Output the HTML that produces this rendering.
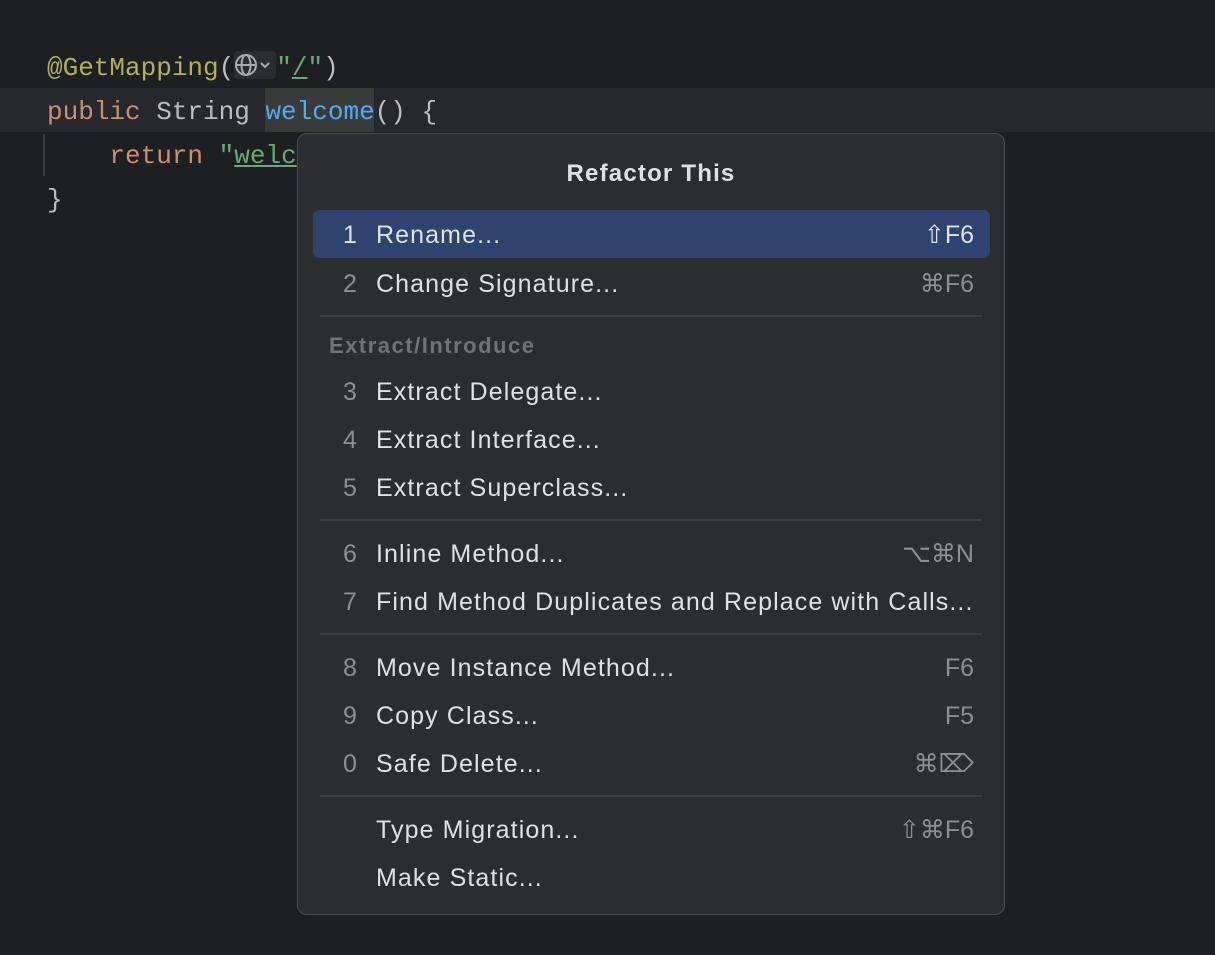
<!DOCTYPE html>
<html><head><meta charset="utf-8"><style>
body{margin:0;width:1215px;height:955px;background:#1e1f22;position:relative;overflow:hidden;font-family:"Liberation Sans",sans-serif}
.code{position:absolute;left:47px;font-family:"Liberation Mono",monospace;font-size:26px;line-height:44px;color:#bcbec4;white-space:pre}
.cur{position:absolute;left:0;top:88px;width:1215px;height:44px;background:#26282e}
.pop{position:absolute;left:297px;top:133px;width:706px;height:780px;background:#2b2d30;border:1px solid #4a4c51;border-radius:10px}
.t{position:absolute;left:0;width:100%;text-align:center;top:26px;font-weight:bold;font-size:24px;letter-spacing:1.2px;color:#dfe1e5}
.r{position:absolute;left:15px;width:677px;height:48px;line-height:50px;font-size:25px;letter-spacing:1.1px;color:#dfe1e5;border-radius:6px}
.r .n{position:absolute;left:30px;color:#8c8f94}
.r .l{position:absolute;left:63px;white-space:nowrap}
.r .k{position:absolute;right:16px;color:#8c8f94;letter-spacing:0}
.sel{background:#2e436e}.sel .n,.sel .k{color:#dfe1e5}
.sep{position:absolute;left:22px;width:662px;height:2px;background:#3d3f43}
.h{position:absolute;left:31px;font-size:22px;letter-spacing:1.5px;font-weight:bold;color:#6f737a}
</style></head><body>
<div class="cur"></div>
<div style="position:absolute;left:265px;top:88px;width:109px;height:44px;background:#373b39"></div>
<div class="code" style="top:46px"><span style="color:#b3ae60">@GetMapping</span>(<span style="display:inline-block;width:42px;height:28px;vertical-align:-4px;background:#2b2d30;border-radius:4px;position:relative"><svg width="42" height="28" style="position:absolute;left:0;top:0"><circle cx="12" cy="14" r="10" fill="none" stroke="#a8aab0" stroke-width="2"/><ellipse cx="12" cy="14" rx="4.5" ry="10" fill="none" stroke="#a8aab0" stroke-width="2"/><line x1="2" y1="14" x2="22" y2="14" stroke="#a8aab0" stroke-width="2"/><path d="M27 12l4 4 4-4" fill="none" stroke="#a8aab0" stroke-width="2"/></svg></span><span style="color:#6aab73">"<u>/</u>"</span>)</div>
<div class="code" style="top:90px"><span style="color:#cf8e6d">public</span> String <span style="color:#56a8f5">welcome</span>() {</div>
<div class="code" style="top:134px">    <span style="color:#cf8e6d">return</span> <span style="color:#6aab73">"<u>welc</u></span></div>
<div class="code" style="top:178px">}</div>
<div style="position:absolute;left:43px;top:134px;width:2px;height:42px;background:#393b40"></div>
<div class="pop">
<div class="t">Refactor This</div>
<div class="r sel" style="top:76px"><span class="n">1</span><span class="l">Rename...</span><span class="k">⇧F6</span></div>
<div class="r" style="top:125px"><span class="n">2</span><span class="l">Change Signature...</span><span class="k">⌘F6</span></div>
<div class="sep" style="top:181px"></div>
<div class="h" style="top:199px">Extract/Introduce</div>
<div class="r" style="top:233px"><span class="n">3</span><span class="l">Extract Delegate...</span></div>
<div class="r" style="top:281px"><span class="n">4</span><span class="l">Extract Interface...</span></div>
<div class="r" style="top:329px"><span class="n">5</span><span class="l">Extract Superclass...</span></div>
<div class="sep" style="top:385px"></div>
<div class="r" style="top:395px"><span class="n">6</span><span class="l">Inline Method...</span><span class="k">⌥⌘N</span></div>
<div class="r" style="top:443px"><span class="n">7</span><span class="l">Find Method Duplicates and Replace with Calls...</span></div>
<div class="sep" style="top:499px"></div>
<div class="r" style="top:509px"><span class="n">8</span><span class="l">Move Instance Method...</span><span class="k">F6</span></div>
<div class="r" style="top:557px"><span class="n">9</span><span class="l">Copy Class...</span><span class="k">F5</span></div>
<div class="r" style="top:605px"><span class="n">0</span><span class="l">Safe Delete...</span><span class="k">⌘⌦</span></div>
<div class="sep" style="top:661px"></div>
<div class="r" style="top:671px"><span class="l">Type Migration...</span><span class="k">⇧⌘F6</span></div>
<div class="r" style="top:719px"><span class="l">Make Static...</span></div>
</div>
</body></html>
